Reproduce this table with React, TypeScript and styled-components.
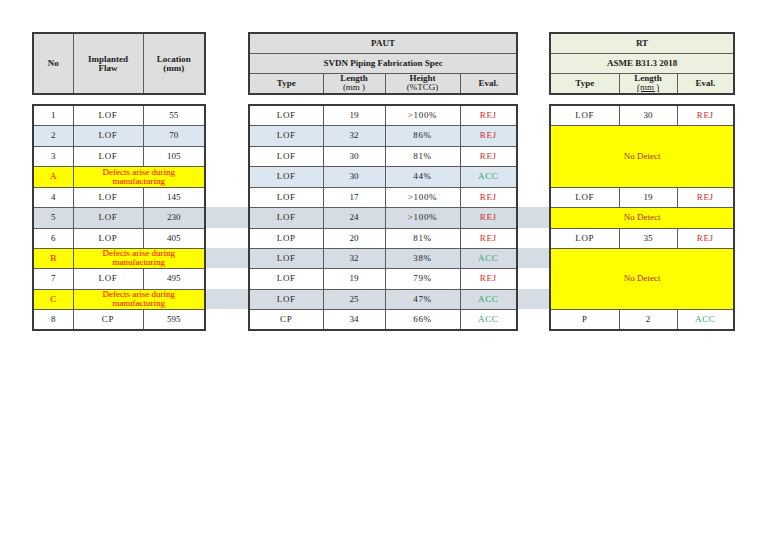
import React from "react";
import styled, { createGlobalStyle } from "styled-components";

const GlobalStyle = createGlobalStyle`
  html, body {
    margin: 0;
    padding: 0;
    background: #fff;
  }
  body {
    font-family: "Liberation Serif", "DejaVu Serif", serif;
  }
`;

const HEAD = "#dedede";
const HEAD_RT = "#ebf1de";
const BLUE = "#dce6f1";
const GRAY = "#d6dce4";
const YELLOW = "#ffff00";
const RED = "#ff0000";
const REJ = "#d42a2a";
const ACC = "#1fa85a";
const NO_DETECT = "#b02a1e";

const Page = styled.div`
  width: 768px;
  height: 543px;
  box-sizing: border-box;
  padding: 32px 0 0 32px;
`;

const Sheet = styled.table`
  border-collapse: collapse;
  table-layout: fixed;
  width: 701px;
`;

const Row = styled.tr<{ $h: number }>`
  height: ${p => p.$h}px;
`;

interface EdgeProps {
  $l?: boolean;
  $r?: boolean;
  $t?: boolean;
  $b?: boolean;
}

const Cell = styled.td<EdgeProps & { $bg?: string; $fg?: string; $bold?: boolean; $spaced?: boolean }>`
  border: 1px solid #5c5c5c;
  ${p => p.$l && "border-left: 2px solid #3a3a3a;"}
  ${p => p.$r && "border-right: 2px solid #3a3a3a;"}
  ${p => p.$t && "border-top: 2px solid #3a3a3a;"}
  ${p => p.$b && "border-bottom: 2px solid #3a3a3a;"}
  background: ${p => p.$bg ?? "#fff"};
  color: ${p => p.$fg ?? "#1c1c1c"};
  font-size: 9px;
  line-height: 9px;
  font-weight: ${p => (p.$bold ? 700 : 400)};
  letter-spacing: ${p => (p.$spaced ? "0.7px" : "0")};
  text-align: center;
  vertical-align: middle;
  padding: 0 2px;
  white-space: nowrap;
  overflow: hidden;
`;

const Gap = styled.td<{ $bg?: string }>`
  border: none;
  padding: 0;
  background: ${p => p.$bg ?? "transparent"};
`;

const Unit = styled.span<{ $u?: boolean }>`
  font-weight: 400;
  text-decoration: ${p => (p.$u ? "underline" : "none")};
`;

type RtCell =
  | { kind: "row"; type: string; len: string; ev: string }
  | { kind: "none"; span: number }
  | { kind: "skip" };

interface DataRow {
  no: string;
  flaw?: string;
  loc?: string;
  defect?: boolean;
  band?: "blue" | "gray";
  paut: [string, string, string, string];
  rt: RtCell;
  h: number;
}

const rows: DataRow[] = [
  { no: "1", flaw: "LOF", loc: "55", paut: ["LOF", "19", ">100%", "REJ"], rt: { kind: "row", type: "LOF", len: "30", ev: "REJ" }, h: 20 },
  { no: "2", flaw: "LOF", loc: "70", band: "blue", paut: ["LOF", "32", "86%", "REJ"], rt: { kind: "none", span: 3 }, h: 21 },
  { no: "3", flaw: "LOF", loc: "105", paut: ["LOF", "30", "81%", "REJ"], rt: { kind: "skip" }, h: 20 },
  { no: "A", defect: true, band: "blue", paut: ["LOF", "30", "44%", "ACC"], rt: { kind: "skip" }, h: 21 },
  { no: "4", flaw: "LOF", loc: "145", paut: ["LOF", "17", ">100%", "REJ"], rt: { kind: "row", type: "LOF", len: "19", ev: "REJ" }, h: 20 },
  { no: "5", flaw: "LOF", loc: "230", band: "gray", paut: ["LOF", "24", ">100%", "REJ"], rt: { kind: "none", span: 1 }, h: 21 },
  { no: "6", flaw: "LOP", loc: "405", paut: ["LOP", "20", "81%", "REJ"], rt: { kind: "row", type: "LOP", len: "35", ev: "REJ" }, h: 20 },
  { no: "B", defect: true, band: "gray", paut: ["LOF", "32", "38%", "ACC"], rt: { kind: "none", span: 3 }, h: 20 },
  { no: "7", flaw: "LOF", loc: "495", paut: ["LOF", "19", "79%", "REJ"], rt: { kind: "skip" }, h: 21 },
  { no: "C", defect: true, band: "gray", paut: ["LOF", "25", "47%", "ACC"], rt: { kind: "skip" }, h: 20 },
  { no: "8", flaw: "CP", loc: "595", paut: ["CP", "34", "66%", "ACC"], rt: { kind: "row", type: "P", len: "2", ev: "ACC" }, h: 21 },
];

const widths = [40, 70, 62, 44, 74, 62, 75, 57, 33, 69, 58, 57];

const evalColor = (v: string) => (v === "REJ" ? REJ : ACC);

const HeaderRows: React.FC = () => (
  <>
    <Row $h={20}>
      <Cell rowSpan={3} $bold $bg={HEAD} $l $t $b>No</Cell>
      <Cell rowSpan={3} $bold $bg={HEAD} $t $b>Implanted<br />Flaw</Cell>
      <Cell rowSpan={3} $bold $bg={HEAD} $t $b $r>Location<br />(mm)</Cell>
      <Gap />
      <Cell colSpan={4} $bold $bg={HEAD} $l $r $t>PAUT</Cell>
      <Gap />
      <Cell colSpan={3} $bold $bg={HEAD_RT} $l $r $t>RT</Cell>
    </Row>
    <Row $h={20}>
      <Gap />
      <Cell colSpan={4} $bold $bg={HEAD} $l $r>SVDN Piping Fabrication Spec</Cell>
      <Gap />
      <Cell colSpan={3} $bold $bg={HEAD_RT} $l $r>ASME B31.3 2018</Cell>
    </Row>
    <Row $h={21}>
      <Gap />
      <Cell $bold $bg={HEAD} $l $b>Type</Cell>
      <Cell $bold $bg={HEAD} $b>Length<br /><Unit>(mm )</Unit></Cell>
      <Cell $bold $bg={HEAD} $b>Height<br /><Unit>(%TCG)</Unit></Cell>
      <Cell $bold $bg={HEAD} $b $r>Eval.</Cell>
      <Gap />
      <Cell $bold $bg={HEAD_RT} $l $b>Type</Cell>
      <Cell $bold $bg={HEAD_RT} $b>Length<br /><Unit $u>(mm )</Unit></Cell>
      <Cell $bold $bg={HEAD_RT} $b $r>Eval.</Cell>
    </Row>
  </>
);

const BodyRow: React.FC<{ row: DataRow; first: boolean; last: boolean }> = ({ row, first, last }) => {
  const bandBg = row.band === "blue" ? BLUE : row.band === "gray" ? GRAY : "#fff";
  const leftBg = row.defect ? YELLOW : bandBg;
  const gapBg = row.band === "gray" ? GRAY : undefined;
  const e = { $t: first, $b: last };
  const rt = row.rt;

  return (
    <Row $h={row.h}>
      <Cell {...e} $l $bg={leftBg} $fg={row.defect ? RED : undefined}>{row.no}</Cell>
      {row.defect ? (
        <Cell {...e} $r colSpan={2} $bg={leftBg} $fg={RED}>
          Defects arise during<br />manufacturing
        </Cell>
      ) : (
        <>
          <Cell {...e} $spaced $bg={leftBg}>{row.flaw}</Cell>
          <Cell {...e} $r $bg={leftBg}>{row.loc}</Cell>
        </>
      )}
      <Gap $bg={gapBg} />
      <Cell {...e} $l $spaced $bg={bandBg}>{row.paut[0]}</Cell>
      <Cell {...e} $bg={bandBg}>{row.paut[1]}</Cell>
      <Cell {...e} $spaced $bg={bandBg}>{row.paut[2]}</Cell>
      <Cell {...e} $r $spaced $bg={bandBg} $fg={evalColor(row.paut[3])}>{row.paut[3]}</Cell>
      <Gap $bg={gapBg} />
      {rt.kind === "row" && (
        <>
          <Cell {...e} $l $spaced>{rt.type}</Cell>
          <Cell {...e}>{rt.len}</Cell>
          <Cell {...e} $r $spaced $fg={evalColor(rt.ev)}>{rt.ev}</Cell>
        </>
      )}
      {rt.kind === "none" && (
        <Cell {...e} $l $r colSpan={3} rowSpan={rt.span} $bg={YELLOW} $fg={NO_DETECT}>
          No Detect
        </Cell>
      )}
    </Row>
  );
};

export default function App() {
  return (
    <>
      <GlobalStyle />
      <Page>
        <Sheet>
          <colgroup>
            {widths.map((w, i) => (
              <col key={i} style={{ width: w }} />
            ))}
          </colgroup>
          <thead>
            <HeaderRows />
            <Row $h={11}>
              <Gap colSpan={12} />
            </Row>
          </thead>
          <tbody>
            {rows.map((r, i) => (
              <BodyRow key={r.no} row={r} first={i === 0} last={i === rows.length - 1} />
            ))}
          </tbody>
        </Sheet>
      </Page>
    </>
  );
}
